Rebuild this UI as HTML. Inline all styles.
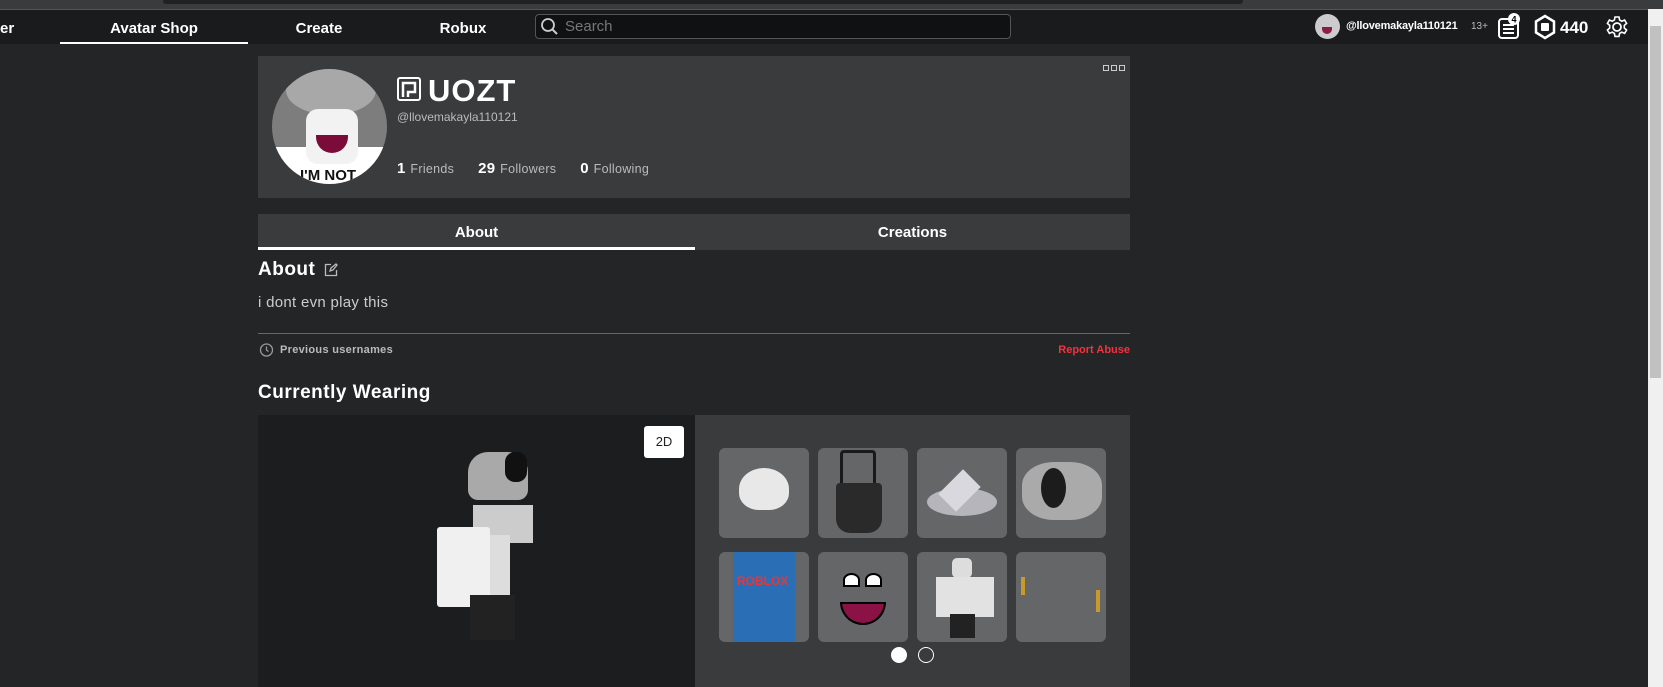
<!DOCTYPE html>
<html><head><style>
*{margin:0;padding:0;box-sizing:border-box}
body{width:1663px;height:687px;background:#232527;font-family:"Liberation Sans",sans-serif;color:#fff;position:relative;overflow:hidden}
.a{position:absolute}
.b{font-weight:bold}
.tile{position:absolute;width:90px;height:90px;background:#656668;border-radius:6px;overflow:hidden}
</style></head><body>
<div class="a" style="left:0;top:0;width:1663px;height:9px;background:#3a3b3d"></div>
<div class="a" style="left:163px;top:0;width:1080px;height:4px;background:#202123;border-radius:0 0 3px 3px"></div>
<div class="a" style="left:0;top:9px;width:1648px;height:35px;background:#191b1d;border-top:1px solid #555"></div>
<div class="a b" style="left:0;top:20px;font-size:15px">er</div>
<div class="a b" style="left:60px;top:20px;width:188px;text-align:center;font-size:15px">Avatar Shop</div>
<div class="a" style="left:60px;top:42px;width:188px;height:2px;background:#fff"></div>
<div class="a b" style="left:279px;top:20px;width:80px;text-align:center;font-size:15px">Create</div>
<div class="a b" style="left:423px;top:20px;width:80px;text-align:center;font-size:15px">Robux</div>
<div class="a" style="left:535px;top:14px;width:476px;height:25px;background:#101113;border:1px solid #555;border-radius:4px"></div>
<svg class="a" style="left:540px;top:17px" width="20" height="20" viewBox="0 0 20 20"><circle cx="8" cy="8" r="6" fill="none" stroke="#ccc" stroke-width="1.8"/><path d="M12.5 12.5L17 17" stroke="#ccc" stroke-width="2"/></svg>
<div class="a" style="left:565px;top:18px;font-size:15px;color:#777">Search</div>
<div class="a" style="left:1315px;top:14px;width:25px;height:25px;border-radius:50%;background:#ccc"></div>
<div class="a" style="left:1322px;top:27px;width:10px;height:7px;border-radius:0 0 5px 5px;background:#8a1e44"></div>
<div class="a b" style="left:1346px;top:20px;font-size:11px;letter-spacing:-0.2px">@llovemakayla110121</div>
<div class="a" style="left:1471px;top:21px;font-size:10px;color:#bbb">13+</div>
<svg class="a" style="left:1497px;top:13px" width="28" height="28" viewBox="0 0 28 28"><rect x="2" y="6" width="19" height="19" rx="3" fill="none" stroke="#fff" stroke-width="2"/><path d="M6 12h11M6 16h11M6 20h11" stroke="#fff" stroke-width="2"/><circle cx="17" cy="6" r="6" fill="#fff"/><text x="17" y="9.5" font-size="9" text-anchor="middle" fill="#000" font-family="Liberation Sans" font-weight="bold">4</text></svg>
<svg class="a" style="left:1533px;top:14px" width="24" height="26" viewBox="0 0 24 26"><path d="M12 2L21 7.5V18.5L12 24L3 18.5V7.5Z" fill="none" stroke="#fff" stroke-width="2.5"/><rect x="8" y="9" width="8" height="8" rx="1" fill="#fff"/></svg>
<div class="a b" style="left:1560px;top:18px;font-size:17px">440</div>
<svg class="a" style="left:1605px;top:15px" width="24" height="24" viewBox="0 0 24 24"><circle cx="12" cy="12" r="4" fill="none" stroke="#fff" stroke-width="1.8"/><path d="M10 2h4l.6 3 2.2 1.2 2.8-1.2 2 3.4-2.3 2v2.6l2.3 2-2 3.4-2.8-1.2-2.2 1.2-.6 3h-4l-.6-3-2.2-1.2-2.8 1.2-2-3.4 2.3-2v-2.6l-2.3-2 2-3.4 2.8 1.2L9.4 5z" fill="none" stroke="#fff" stroke-width="1.6"/></svg>
<div class="a" style="left:1648px;top:9px;width:15px;height:678px;background:#f0f0f0"></div>
<div class="a" style="left:1650px;top:26px;width:11px;height:352px;background:#c1c1c1"></div>

<div class="a" style="left:258px;top:56px;width:872px;height:142px;background:#393b3d"></div>
<div class="a" style="left:272px;top:69px;width:115px;height:115px;border-radius:50%;background:#7d7d7d;overflow:hidden">
<div class="a" style="left:14px;top:-4px;width:90px;height:50px;border-radius:50%;background:#a8a8a8"></div>
<div class="a" style="left:0;top:78px;width:115px;height:40px;background:#fff"></div>
<div class="a" style="left:34px;top:40px;width:52px;height:55px;border-radius:12px;background:#f2f2f2"></div>
<div class="a" style="left:44px;top:66px;width:32px;height:18px;border-radius:0 0 16px 16px;background:#7b0c3a"></div>
<div class="a b" style="left:28px;top:98px;font-size:15px;color:#111">I'M NOT</div>
</div>
<svg class="a" style="left:397px;top:77px" width="24" height="24" viewBox="0 0 24 24"><rect x="1" y="1" width="22" height="22" rx="2" fill="none" stroke="#fff" stroke-width="2"/><path d="M6 20V6h12v9h-7v5" fill="none" stroke="#fff" stroke-width="2.5"/></svg>
<div class="a b" style="left:428px;top:73px;font-size:31px;letter-spacing:1px">UOZT</div>
<div class="a" style="left:397px;top:110px;font-size:12px;color:#bbb">@llovemakayla110121</div>
<div class="a" style="left:397px;top:160px;font-size:12.5px;color:#bbb;letter-spacing:0.3px;word-spacing:1px"><b style="color:#fff;font-size:15px">1</b> Friends &nbsp;&nbsp;&nbsp;&nbsp;<b style="color:#fff;font-size:15px">29</b> Followers &nbsp;&nbsp;&nbsp;&nbsp;<b style="color:#fff;font-size:15px">0</b> Following</div>
<div class="a" style="left:1103px;top:65px;font-size:0"><span style="display:inline-block;width:6px;height:6px;border:1.5px solid #ccc;margin-right:2px"></span><span style="display:inline-block;width:6px;height:6px;border:1.5px solid #ccc;margin-right:2px"></span><span style="display:inline-block;width:6px;height:6px;border:1.5px solid #ccc"></span></div>

<div class="a" style="left:258px;top:214px;width:872px;height:36px;background:#393b3d"></div>
<div class="a b" style="left:258px;top:224px;width:437px;text-align:center;font-size:15px">About</div>
<div class="a b" style="left:695px;top:224px;width:435px;text-align:center;font-size:15px">Creations</div>
<div class="a" style="left:258px;top:247px;width:437px;height:3px;background:#fff"></div>

<div class="a b" style="left:258px;top:259px;font-size:19px;letter-spacing:0.5px">About</div>
<svg class="a" style="left:324px;top:263px" width="14" height="14" viewBox="0 0 14 14"><path d="M7 1.5H1.5v11h11V7" fill="none" stroke="#bbb" stroke-width="1.3"/><path d="M6 8l1-3 5-4 1 1-4 5z" fill="none" stroke="#bbb" stroke-width="1.3"/></svg>
<div class="a" style="left:258px;top:294px;font-size:15px;color:#ccc;letter-spacing:0.3px">i dont evn play this</div>
<div class="a" style="left:258px;top:333px;width:872px;height:1px;background:#666"></div>
<svg class="a" style="left:258px;top:342px" width="16" height="16" viewBox="0 0 16 16"><circle cx="8.5" cy="8" r="6" fill="none" stroke="#999" stroke-width="1.3"/><path d="M8.5 4.5V8l2 1.5" fill="none" stroke="#999" stroke-width="1.3"/></svg>
<div class="a b" style="left:280px;top:344px;font-size:11px;color:#bbb;letter-spacing:0.3px">Previous usernames</div>
<div class="a b" style="left:1000px;top:344px;width:130px;text-align:right;font-size:11px;color:#f5313d">Report Abuse</div>

<div class="a b" style="left:258px;top:382px;font-size:19px;letter-spacing:0.5px">Currently Wearing</div>
<div class="a" style="left:258px;top:415px;width:437px;height:272px;background:#1c1d1f"></div>
<div class="a" style="left:695px;top:415px;width:435px;height:272px;background:#393b3d"></div>
<div class="a" style="left:644px;top:426px;width:40px;height:32px;background:#fff;border-radius:3px;color:#222;font-size:13px;text-align:center;line-height:32px">2D</div>
<div class="a" style="left:468px;top:452px;width:60px;height:48px;border-radius:20px 20px 10px 10px;background:#a9a9a9"></div>
<div class="a" style="left:505px;top:452px;width:22px;height:30px;border-radius:10px;background:#111"></div>
<div class="a" style="left:473px;top:505px;width:60px;height:38px;background:#ccc"></div>
<div class="a" style="left:437px;top:527px;width:53px;height:80px;background:#f0f0f0;border-radius:3px"></div>
<div class="a" style="left:490px;top:535px;width:20px;height:60px;background:#ddd"></div>
<div class="a" style="left:470px;top:595px;width:45px;height:45px;background:#222"></div>

<div class="tile" style="left:719px;top:448px"><div class="a" style="left:20px;top:20px;width:50px;height:42px;border-radius:50% 50% 40% 40%;background:#e8e8e8"></div></div>
<div class="tile" style="left:818px;top:448px"><div class="a" style="left:22px;top:2px;width:36px;height:40px;border:3px solid #1a1a1a;border-bottom:none;border-radius:4px"></div><div class="a" style="left:18px;top:35px;width:46px;height:50px;background:#2a2a2a;border-radius:4px 4px 14px 14px"></div></div>
<div class="tile" style="left:917px;top:448px"><div class="a" style="left:10px;top:40px;width:70px;height:28px;border-radius:50%;background:#b5b5bb"></div><div class="a" style="left:30px;top:25px;width:25px;height:35px;background:#d8d8de;transform:rotate(45deg)"></div></div>
<div class="tile" style="left:1016px;top:448px"><div class="a" style="left:6px;top:14px;width:80px;height:58px;border-radius:40%;background:#aaa"></div><div class="a" style="left:25px;top:20px;width:25px;height:40px;border-radius:50%;background:#1c1c1c"></div></div>
<div class="tile" style="left:719px;top:552px"><div class="a" style="left:14px;top:0;width:62px;height:90px;background:#2a6fb5"></div><div class="a b" style="left:18px;top:22px;font-size:12px;color:#e33">ROBLOX</div></div>
<div class="tile" style="left:818px;top:552px"><div class="a" style="left:25px;top:21px;width:17px;height:14px;border-radius:50% 50% 0 0;background:#fff;border:2px solid #000"></div><div class="a" style="left:47px;top:21px;width:17px;height:14px;border-radius:50% 50% 0 0;background:#fff;border:2px solid #000"></div><div class="a" style="left:22px;top:50px;width:46px;height:23px;border-radius:0 0 23px 23px;background:#8a1245;border:2px solid #000"></div></div>
<div class="tile" style="left:917px;top:552px"><div class="a" style="left:35px;top:6px;width:20px;height:20px;border-radius:5px;background:#ddd"></div><div class="a" style="left:19px;top:25px;width:58px;height:40px;background:#e2e2e2"></div><div class="a" style="left:33px;top:62px;width:25px;height:24px;background:#222"></div></div>
<div class="tile" style="left:1016px;top:552px"><div class="a" style="left:5px;top:25px;width:4px;height:18px;background:#c89a2a"></div><div class="a" style="left:80px;top:38px;width:4px;height:22px;background:#c89a2a"></div></div>
<div class="a" style="left:891px;top:647px;width:16px;height:16px;border-radius:50%;background:#fff"></div>
<div class="a" style="left:918px;top:647px;width:16px;height:16px;border-radius:50%;border:1.5px solid #fff"></div>
</body></html>
